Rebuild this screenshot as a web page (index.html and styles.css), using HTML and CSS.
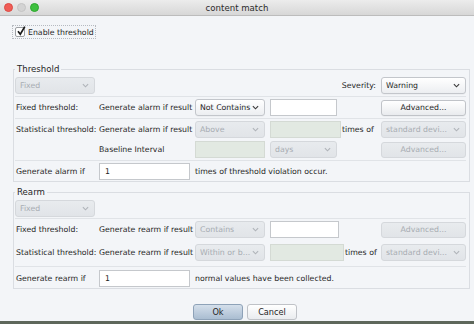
FILE: index.html
```html
<!DOCTYPE html>
<html>
<head>
<meta charset="utf-8">
<title>content match</title>
<link rel="stylesheet" href="styles.css">
</head>
<body>
<div class="window">
  <div class="titlebar">
    <div class="lights">
      <span class="light red"></span>
      <span class="light gray"></span>
      <span class="light green"></span>
    </div>
    <div class="title">content match</div>
    <div></div>
  </div>
  <div class="content">
    <div class="enable">
      <span class="checkbox"><svg viewBox="0 0 10 10"><path d="M2 5.2l2.3 3L8.8 0.6"/></svg></span>
      <span>Enable threshold</span>
    </div>

    <fieldset class="group first">
      <legend>Threshold</legend>
      <div class="sec">
        <div class="row">
          <div class="sel dis w80">Fixed<svg class="chev" viewBox="0 0 8 5"><path d="M1 1l3 3 3-3"/></svg></div>
          <span class="sev">Severity:</span>
          <div class="sel w85">Warning<svg class="chev" viewBox="0 0 8 5"><path d="M1 1l3 3 3-3"/></svg></div>
        </div>
      </div>
      <div class="sec">
        <div class="row">
          <span class="lbl">Fixed threshold:</span>
          <span class="txt2">Generate alarm if result</span>
          <div class="sel w70">Not Contains<svg class="chev" viewBox="0 0 8 5"><path d="M1 1l3 3 3-3"/></svg></div>
          <div class="inp w67"></div>
          <div class="btn right">Advanced...</div>
        </div>
      </div>
      <div class="sec">
        <div class="row">
          <span class="lbl">Statistical threshold:</span>
          <span class="txt2">Generate alarm if result</span>
          <div class="sel dis w70">Above<svg class="chev" viewBox="0 0 8 5"><path d="M1 1l3 3 3-3"/></svg></div>
          <div class="inp dis w71"></div>
          <span class="times">times of</span>
          <div class="sel dis right">standard devi...<svg class="chev" viewBox="0 0 8 5"><path d="M1 1l3 3 3-3"/></svg></div>
        </div>
        <div class="row gap3">
          <span class="lbl"></span>
          <span class="txt2">Baseline Interval</span>
          <div class="inp dis w70b"></div>
          <div class="sel dis w67 ml5">days<svg class="chev" viewBox="0 0 8 5"><path d="M1 1l3 3 3-3"/></svg></div>
          <div class="btn dis right">Advanced...</div>
        </div>
      </div>
      <div class="sec">
        <div class="row">
          <span class="lbl">Generate alarm if</span>
          <div class="inp w91 ml0">1</div>
          <span class="after">times of threshold violation occur.</span>
        </div>
      </div>
    </fieldset>

    <fieldset class="group second">
      <legend>Rearm</legend>
      <div class="sec r1">
        <div class="row">
          <div class="sel dis w80">Fixed<svg class="chev" viewBox="0 0 8 5"><path d="M1 1l3 3 3-3"/></svg></div>
        </div>
      </div>
      <div class="sec r2">
        <div class="row">
          <span class="lbl">Fixed threshold:</span>
          <span class="txt2">Generate rearm if result</span>
          <div class="sel dis w70">Contains<svg class="chev" viewBox="0 0 8 5"><path d="M1 1l3 3 3-3"/></svg></div>
          <div class="inp w69"></div>
          <div class="btn dis right">Advanced...</div>
        </div>
        <div class="row gap6">
          <span class="lbl">Statistical threshold:</span>
          <span class="txt2">Generate rearm if result</span>
          <div class="sel dis w70">Within or b...<svg class="chev" viewBox="0 0 8 5"><path d="M1 1l3 3 3-3"/></svg></div>
          <div class="inp dis w74"></div>
          <span class="times">times of</span>
          <div class="sel dis right">standard devi...<svg class="chev" viewBox="0 0 8 5"><path d="M1 1l3 3 3-3"/></svg></div>
        </div>
      </div>
      <div class="sec r3">
        <div class="row">
          <span class="lbl">Generate rearm if</span>
          <div class="inp w91 ml0">1</div>
          <span class="after">normal values have been collected.</span>
        </div>
      </div>
    </fieldset>

    <div class="footer">
      <div class="pbtn ok">Ok</div>
      <div class="pbtn">Cancel</div>
    </div>
  </div>
</div>
</body>
</html>
```

FILE: styles.css
```css
* { box-sizing: border-box; }
html, body { margin: 0; padding: 0; }
body {
  width: 474px;
  height: 324px;
  overflow: hidden;
  background: #5e675b;
  font-family: "DejaVu Sans", "Liberation Sans", sans-serif;
  font-size: 7.8px;
  color: #262626;
}
.window {
  height: 321px;
  background: #f3f5f8;
  display: flex;
  flex-direction: column;
}
.titlebar {
  height: 16px;
  flex: none;
  display: grid;
  grid-template-columns: 1fr auto 1fr;
  align-items: center;
  background: linear-gradient(#ececec, #d7d7d7);
  border-bottom: 1px solid #bcbcbc;
}
.lights { display: flex; gap: 4px; padding-left: 4px; }
.light { width: 9px; height: 9px; border-radius: 50%; display: block; }
.light.red { background: #f05d57; border: 0.5px solid #dc4b44; }
.light.gray { background: #d3d3d3; border: 0.5px solid #c4c4c4; }
.light.green { background: #3ec03f; border: 0.5px solid #2ea72f; }
.title { font-size: 8.6px; color: #2b2b2b; }

.content { padding: 0 0 0 12px; display: flex; flex-direction: column; }

.enable {
  margin-top: 9px;
  width: 84px;
  height: 14px;
  border: 1px dotted #b6bac0;
  display: flex;
  align-items: center;
  padding-left: 2px;
  gap: 3px;
}
.checkbox {
  width: 10px;
  height: 10px;
  background: #fff;
  border: 1px solid #9c9fa3;
  border-radius: 2px;
  display: block;
  position: relative;
}
.checkbox svg {
  position: absolute;
  left: 0;
  top: -2px;
  width: 10px;
  height: 10px;
  fill: none;
  stroke: #1a1a1a;
  stroke-width: 1.7;
}

.group {
  margin: 0 4px 0 1px;
  padding: 0 3px 0 1px;
  border: 1px solid #dadde2;
  min-width: 0;
}
.group.first { margin-top: 25px; }
.group.second { margin-top: 5px; }
.group legend {
  padding: 0 2px;
  font-size: 8.6px;
  line-height: 11px;
  color: #262626;
}

.sec { padding: 2px 0; border-bottom: 1px solid #e0e3e7; }
.sec:last-child { border-bottom: 0; padding-bottom: 1px; }
.sec.r1 { padding: 2px 0 1px; }
.sec.r2 { padding: 2px 0 5px; }
.sec.r3 { padding: 3px 0 1px; }

.row { display: flex; align-items: center; height: 17px; white-space: nowrap; }
.row.gap3 { margin-top: 3px; }
.row.gap6 { margin-top: 6px; }

.lbl { width: 84px; padding-left: 1px; flex: none; }
.txt2 { width: 96px; flex: none; }
.sev { margin-left: auto; margin-right: 5px; }
.times { margin-left: 1px; }
.after { margin-left: 5px; }

.sel {
  flex: none;
  height: 17px;
  display: flex;
  align-items: center;
  justify-content: space-between;
  padding: 0 5px 0 4px;
  border: 1px solid #c3c6cb;
  border-radius: 3px;
  background: linear-gradient(#ffffff, #eceef1);
  box-shadow: 0 0.5px 0 rgba(0,0,0,0.06);
  overflow: hidden;
}
.sel.dis {
  color: #a7acb2;
  background: linear-gradient(#e8ebee, #e1e4e8);
  border-color: #d5d8dc;
  box-shadow: none;
}
.chev { width: 7px; height: 5px; flex: none; fill: none; stroke: #3a3a3a; stroke-width: 1.3; }
.sel.dis .chev { stroke: #b0b4b9; }

.inp {
  flex: none;
  height: 17px;
  margin-left: 5px;
  display: flex;
  align-items: center;
  padding: 0 5px;
  background: #fff;
  border: 1px solid #c5c8cc;
}
.inp.dis { background: #e2e9e2; border-color: #d4dad4; }
.ml0 { margin-left: 0; }
.ml5 { margin-left: 5px; }

.btn {
  flex: none;
  height: 16px;
  display: flex;
  align-items: center;
  justify-content: center;
  border: 1px solid #c0c3c8;
  border-radius: 3px;
  background: linear-gradient(#ffffff, #e9ebee);
  box-shadow: 0 0.5px 0 rgba(0,0,0,0.06);
}
.btn.dis { color: #a7acb2; background: linear-gradient(#e8ebee, #e1e4e8); border-color: #d5d8dc; box-shadow: none; }
.right { margin-left: auto; width: 85px; }

.w67 { width: 67px; }
.w69 { width: 69px; }
.w70 { width: 70px; }
.w70b { width: 70px; margin-left: 0; }
.w71 { width: 71px; }
.w74 { width: 74px; }
.w80 { width: 80px; }
.w85 { width: 85px; }
.w91 { width: 91px; }

.footer {
  margin-top: 15px;
  display: flex;
  justify-content: center;
  gap: 4px;
  padding-left: 4px;
}
.pbtn {
  width: 50px;
  height: 16px;
  display: flex;
  align-items: center;
  justify-content: center;
  border: 1px solid #bfc2c7;
  border-radius: 3px;
  background: linear-gradient(#ffffff, #eaecef);
  font-size: 8.2px;
}
.pbtn.ok {
  background: linear-gradient(#d4dfeb, #aabdd1);
  border-color: #8ea2b8;
}
```
